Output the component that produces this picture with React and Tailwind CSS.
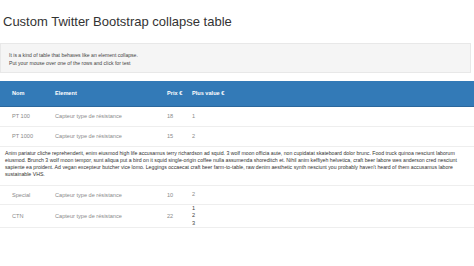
import React from 'react';

const rows = [
  { nom: 'PT 100', element: 'Capteur type de résistance', prix: '18', plus: ['1'] },
  { nom: 'PT 1000', element: 'Capteur type de résistance', prix: '15', plus: ['2'] },
];

const rowsAfter = [
  { nom: 'Special', element: 'Capteur type de résistance', prix: '10', plus: ['2'], h: 'h-[19px]' },
  { nom: 'CTN', element: 'Capteur type de résistance', prix: '22', plus: ['1', '2', '3'], h: 'h-[23px]' },
];

const Row = ({ row, h = 'h-[20px]' }) => (
  <div className={`grid grid-cols-[43px_112px_25px_1fr] items-center pl-[12px] border-b border-[#eeeeee] text-[5.6px] text-[#8a8a8a] ${h}`}>
    <span>{row.nom}</span>
    <span>{row.element}</span>
    <span>{row.prix}</span>
    <div className={`flex flex-col leading-[7.2px] ${row.plus.length > 1 ? 'text-[#444]' : ''}`}>
      {row.plus.map((p) => (
        <span key={p}>{p}</span>
      ))}
    </div>
  </div>
);

export default function App() {
  return (
    <div className="w-[474px] h-[266px] bg-white overflow-hidden font-['Liberation_Sans',Arial,sans-serif] text-[#333]">
      {/* Title */}
      <h1 className="pt-[15px] pl-[3px] text-[13px] leading-[14px] text-[#333]">
        Custom Twitter Bootstrap collapse table
      </h1>

      {/* Well */}
      <div className="mt-[14px] mr-[3px] h-[30px] bg-[#f5f5f5] border border-[#e8e8e8] pl-[8px] pt-[7px] text-[5.1px] leading-[8px] text-[#444]">
        <p>It is a kind of table that behaves like an element collapse.</p>
        <p>Put your mouse over one of the rows and click for test</p>
      </div>

      {/* Table */}
      <div className="mt-[8px]">
        <div className="grid grid-cols-[43px_112px_25px_1fr] items-center pl-[12px] h-[26px] bg-[#337ab7] border-b border-[#2b679c] text-white font-bold text-[5.6px]">
          <span>Nom</span>
          <span>Element</span>
          <span>Prix €</span>
          <span>Plus value €</span>
        </div>
        {rows.map((r) => (
          <Row key={r.nom} row={r} />
        ))}
        <p className="pl-[5px] pr-[4px] pt-[3px] pb-[7px] border-b border-[#eeeeee] text-[5.2px] leading-[7px] text-[#333]">
          Anim pariatur cliche reprehenderit, enim eiusmod high life accusamus terry richardson ad squid. 3 wolf moon officia aute, non cupidatat skateboard dolor brunc. Food truck quinoa nesciunt laborum eiusmod. Brunch 3 wolf moon tempor, sunt aliqua put a bird on it squid single-origin coffee nulla assumenda shoreditch et. Nihil anim keffiyeh helvetica, craft beer labore wes anderson cred nesciunt sapiente ea proident. Ad vegan excepteur butcher vice lomo. Leggings occaecat craft beer farm-to-table, raw denim aesthetic synth nesciunt you probably haven't heard of them accusamus labore sustainable VHS.
        </p>
        {rowsAfter.map((r) => (
          <Row key={r.nom} row={r} h={r.h} />
        ))}
      </div>
    </div>
  );
}
